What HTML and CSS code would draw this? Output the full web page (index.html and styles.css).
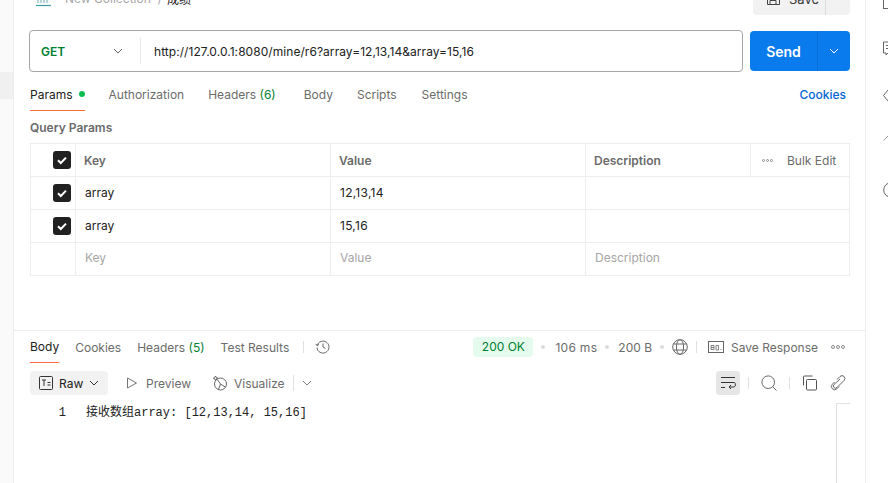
FILE: index.html
```html
<!DOCTYPE html>
<html lang="en">
<head>
<meta charset="utf-8">
<title>Postman request</title>
<link rel="stylesheet" href="styles.css">
</head>
<body>
<div class="app">
  <aside class="left-rail"><div class="rail-active"></div></aside>
  <main class="main">
    <header class="crumbs">
      <div class="crumb-left">
        <svg class="http-icon" width="16" height="16" viewBox="0 0 16 16"><path d="M1 14.500h15" stroke="#3d9ba3" stroke-width="1.200" fill="none"/><path d="M3 5v7M6 5v7M9 5v7M12 5v7" stroke="#6fa9ae" fill="none"/></svg>
        <span class="crumb-parent">New Collection</span>
        <span class="crumb-sep">/</span>
        <span class="crumb-current">成绩</span>
      </div>
      <div class="save-btn">
        <span class="save-main">
          <svg width="16" height="16" viewBox="0 0 16 16" fill="none" stroke="#444"><path d="M2.500 2.500h9l3 3v8h-12zM5 13.500v-4h6v4"/></svg>
          <span>Save</span>
        </span>
        <span class="save-caret"><svg width="10" height="10" viewBox="0 0 10 10"><path d="M2.500 3.500L5 6l2.500-2.500" stroke="#333" fill="none"/></svg></span>
      </div>
    </header>

    <section class="url-row">
      <div class="url-box">
        <div class="method">
          <span class="method-name">GET</span>
          <svg width="12" height="12" viewBox="0 0 12 12"><path d="M2 4l4 4 4-4" stroke="#666" fill="none"/></svg>
        </div>
        <div class="url-text">http://127.0.0.1:8080/mine/r6?array=12,13,14&amp;array=15,16</div>
      </div>
      <div class="send">
        <span class="send-main">Send</span>
        <span class="send-caret"><svg width="12" height="12" viewBox="0 0 12 12"><path d="M2 4l4 4 4-4" stroke="#fff" fill="none"/></svg></span>
      </div>
    </section>

    <nav class="req-tabs">
      <span class="tab active">Params<i class="dot"></i></span>
      <span class="tab t-auth">Authorization</span>
      <span class="tab t-head">Headers <em>(6)</em></span>
      <span class="tab t-body">Body</span>
      <span class="tab t-scripts">Scripts</span>
      <span class="tab">Settings</span>
      <span class="cookies">Cookies</span>
    </nav>

    <h2 class="qp-title">Query Params</h2>

    <div class="table">
      <div class="row head">
        <div class="cell check"><span class="box"><svg width="12" height="12" viewBox="0 0 12 12"><path d="M2 6.200l2.800 2.800L10 3.600" stroke="#fff" stroke-width="2" fill="none"/></svg></span></div>
        <div class="cell th th-key">Key</div>
        <div class="cell th th-value">Value</div>
        <div class="cell th desc-head">
          <span class="desc-label">Description</span>
          <span class="bulk"><i class="dots"><b></b><b></b><b></b></i><span>Bulk Edit</span></span>
        </div>
      </div>
      <div class="row body-row">
        <div class="cell check"><span class="box"><svg width="12" height="12" viewBox="0 0 12 12"><path d="M2 6.200l2.800 2.800L10 3.600" stroke="#fff" stroke-width="2" fill="none"/></svg></span></div>
        <div class="cell">array</div>
        <div class="cell num">12,13,14</div>
        <div class="cell"></div>
      </div>
      <div class="row body-row">
        <div class="cell check"><span class="box"><svg width="12" height="12" viewBox="0 0 12 12"><path d="M2 6.200l2.800 2.800L10 3.600" stroke="#fff" stroke-width="2" fill="none"/></svg></span></div>
        <div class="cell">array</div>
        <div class="cell num">15,16</div>
        <div class="cell"></div>
      </div>
      <div class="row last">
        <div class="cell check"></div>
        <div class="cell ph">Key</div>
        <div class="cell ph">Value</div>
        <div class="cell ph">Description</div>
      </div>
    </div>

    <section class="response">
      <div class="res-bar">
        <nav class="res-tabs">
          <span class="tab active">Body</span>
          <span class="tab">Cookies</span>
          <span class="tab">Headers <em>(5)</em></span>
          <span class="tab">Test Results</span>
          <i class="vsep hist-sep"></i>
          <svg class="hist" width="16" height="16" viewBox="0 0 16 16" fill="none" stroke="#666"><path d="M2.200 6.500A6 6 0 1 1 2 8.500M.8 5l1.400 1.800L4 5.400M8 4.500V8l2.500 1.500"/></svg>
        </nav>
        <div class="res-meta">
          <span class="status">200 OK</span>
          <i class="mdot"></i><span class="m-time">106 ms</span>
          <i class="mdot"></i><span class="m-size">200 B</span>
          <i class="mdot"></i>
          <svg class="globe" width="16" height="16" viewBox="0 0 16 16" fill="none" stroke="#666"><circle cx="8" cy="8" r="7.300"/><ellipse cx="8" cy="8" rx="3.600" ry="7.300"/><path d="M1.600 5h12.800M1.600 11h12.800"/></svg>
          <i class="vsep"></i>
          <span class="save-res">
            <svg width="16" height="12" viewBox="0 0 16 12" fill="none"><rect x=".5" y=".5" width="15" height="11" stroke="#666"/><path d="M3 4.500h3v4H3zM3 6.500h3M8 4.500h2.500v4.500H8zM12.500 8.500h1" stroke="#666" stroke-width=".8"/></svg>
            <span>Save Response</span>
          </span>
          <i class="dots big"><b></b><b></b><b></b></i>
        </div>
      </div>

      <div class="res-tools">
        <div class="raw">
          <svg width="14" height="14" viewBox="0 0 14 14" fill="none" stroke="#333"><rect x=".5" y=".5" width="13" height="13" rx="1"/><path d="M3 4h4M5 4v6M8.500 6.500h3M8.500 9h3"/></svg>
          <span>Raw</span>
          <svg width="10" height="10" viewBox="0 0 10 10"><path d="M1 3l4 4 4-4" stroke="#333" fill="none"/></svg>
        </div>
        <span class="tool preview">
          <svg width="12" height="12" viewBox="0 0 12 12" fill="none" stroke="#777"><path d="M1.500 1v10L10.500 6z"/></svg>
          <span>Preview</span>
        </span>
        <span class="tool visualize">
          <svg width="16" height="16" viewBox="0 0 16 16" fill="none" stroke="#666"><circle cx="8.500" cy="9" r="6"/><path d="M8.500 9L5 4.200M8.500 9l4.800 3M8.500 9l-2 5.500M3.500 1l.7 1.500 1.500.7-1.500.7-.7 1.500-.7-1.500-1.500-.7 1.500-.7z"/></svg>
          <span>Visualize</span>
        </span>
        <i class="vsep tall"></i>
        <svg class="vis-caret" width="10" height="10" viewBox="0 0 10 10"><path d="M1 3l4 4 4-4" stroke="#777" fill="none"/></svg>
        <div class="tool-right">
          <span class="wrap-btn"><svg width="16" height="14" viewBox="0 0 16 14" fill="none" stroke="#333"><path d="M1 1.500h14M1 6.500h13c2 0 2 4.500-.5 4.500H9M11 9l-2 2 2 2M1 11.500h4"/></svg></span>
          <i class="vsep"></i>
          <svg width="16" height="16" viewBox="0 0 16 16" fill="none" stroke="#666"><circle cx="7.200" cy="7.200" r="6.300"/><path d="M11.800 11.800L15.500 15.500"/></svg>
          <i class="vsep"></i>
          <svg width="16" height="16" viewBox="0 0 16 16" fill="none" stroke="#555"><path d="M1.500 10.500V2a1 1 0 0 1 1-1h8"/><rect x="4.500" y="4.500" width="10" height="10.500" rx="1"/></svg>
          <svg width="16" height="16" viewBox="0 0 16 16" fill="none" stroke="#666"><path d="M7 4.500l3-3a2.800 2.800 0 0 1 4 4L7 12.500a2 2 0 0 1-3-3L10 4M9 11.500l-2 2.200a3.200 3.200 0 0 1-4.700-4.400L4.500 7"/></svg>
        </div>
      </div>

      <div class="code-area">
        <div class="code-line"><span class="ln">1</span><span class="code"><span class="cjk">接收数组</span>array: [12,13,14, 15,16]</span></div>
        <div class="code-scroll"></div>
      </div>
    </section>
  </main>
  <aside class="right-rail">
    <svg width="16" height="16" viewBox="0 0 16 16" fill="none" stroke="#666"><rect x=".5" y=".5" width="13" height="13"/></svg>
    <svg width="16" height="16" viewBox="0 0 16 16" fill="none" stroke="#666"><path d="M.5 1h14v11H5l-2 2v-2H.5zM3 4.500h8M3 7.500h8"/></svg>
    <svg width="16" height="16" viewBox="0 0 16 16" fill="none" stroke="#666"><path d="M5 2L.5 7.500 5 13"/></svg>
    <svg width="16" height="16" viewBox="0 0 16 16" fill="none" stroke="#999"><path d="M.5 6.500L6 1"/></svg>
    <svg width="16" height="16" viewBox="0 0 16 16" fill="none" stroke="#666"><circle cx="8" cy="8" r="7.300"/></svg>
  </aside>
</div>
</body>
</html>
```
FILE: styles.css
```css
* { box-sizing: border-box; }
html, body { margin: 0; padding: 0; height: 100%; background: #fff; overflow: hidden; }
body { font-family: Inter, "Noto Sans CJK SC", sans-serif; font-size: 12px; color: #212121; }
svg { display: block; flex: none; }
i, em { font-style: normal; }

.app { display: flex; width: 888px; height: 483px; overflow: hidden; }

.left-rail { width: 14px; flex: none; background: #fafafa; border-right: 1px solid #ededed; padding-top: 72px; }
.rail-active { height: 27px; background: #f0f0f0; }

.main { width: 851px; flex: none; display: flex; flex-direction: column; height: 483px; }

.crumbs { display: flex; justify-content: space-between; align-items: center; height: 31px; margin-top: -16px; padding: 0 15px 0 21px; }
.crumb-left { display: flex; align-items: center; color: #a6a6a6; font-size: 12px; padding-bottom: 2px; }
.http-icon { margin-right: 14px; }
.crumb-sep { margin: 0 5px 0 7px; }
.crumb-current { color: #212121; font-size: 12px; }
.save-btn { display: flex; height: 31px; background: #f2f2f2; border-radius: 4px; }
.save-main { display: flex; align-items: center; gap: 8px; padding: 0 12px 2px; width: 73px; border-right: 1px solid #dcdcdc; font-size: 13px; color: #3a3a3a; }
.save-caret { width: 24px; display: flex; align-items: center; justify-content: center; padding-bottom: 2px; }

.url-row { display: flex; align-items: center; gap: 7px; margin: 15px 15px 0; height: 42px; }
.url-box { width: 714px; height: 42px; display: flex; align-items: center; border: 1px solid #a6a6a6; border-radius: 4px; }
.method { display: flex; align-items: center; justify-content: space-between; width: 111px; height: 26px; padding: 0 16px 0 11px; border-right: 1px solid #e6e6e6; }
.method-name { color: #007f31; font-size: 12px; font-weight: 600; }
.url-text { padding-left: 13px; font-size: 12px; letter-spacing: .055px; color: #212121; }
.send { display: flex; width: 100px; height: 40px; background: #097bed; color: #fff; border-radius: 4px; }
.send-main { width: 68px; display: flex; align-items: center; justify-content: center; font-size: 14px; font-weight: 600; border-right: 1px solid #0a6fd4; }
.send-caret { flex: 1; display: flex; align-items: center; justify-content: center; }

.req-tabs { display: flex; align-items: flex-start; height: 39px; margin: 0 15px 0 16px; }
.tab { display: inline-flex; align-items: center; height: 100%; color: #6b6b6b; font-size: 12px; white-space: pre; }
.tab em { color: #007f31; }
.tab.active { color: #212121; border-bottom: 1px solid #ff6c37; }
.req-tabs .tab { height: 39px; margin-right: 24px; padding-top: 6px; }
.req-tabs .tab.t-head { margin-right: 28px; }
.req-tabs .tab.t-scripts { margin-right: 25px; }
.dot { width: 6px; height: 6px; border-radius: 50%; background: #0cbb52; margin-left: 6px; }
.cookies { margin-left: auto; margin-right: 4px; padding-top: 15px; color: #0265d2; font-size: 12px; font-weight: 500; }

.qp-title { margin: 9px 15px 0 16px; height: 26px; font-size: 12px; line-height: 15px; font-weight: 600; color: #6b6b6b; }

.table { width: 820px; margin-left: 16px; border: 1px solid #ededed; border-bottom: 0; }
.row { display: grid; grid-template-columns: 45px 255px 255px 1fr; height: 33px; border-bottom: 1px solid #ededed; }
.cell { display: flex; align-items: center; padding-left: 9px; border-right: 1px solid #ededed; color: #212121; }
.cell:last-child { border-right: 0; }
.body-row .cell { padding-bottom: 2px; }
.last .cell { padding-bottom: 3px; }
.body-row .cell.check { padding-bottom: 0; }
.num { letter-spacing: .25px; }
.check { justify-content: flex-end; padding: 0 4px 0 0; }
.box { width: 18px; height: 18px; background: #212121; border-radius: 3px; display: flex; align-items: center; justify-content: center; }
.th { color: #6b6b6b; font-weight: 600; }
.th-key, .th-value { padding-left: 8px; }
.ph { color: #a6a6a6; }
.desc-head { justify-content: space-between; padding: 0 0 0 8px; }
.bulk { display: flex; align-items: center; gap: 14px; width: 99px; height: 100%; padding-left: 11px; border-left: 1px solid #ededed; color: #6b6b6b; font-weight: 400; }
.dots { display: inline-flex; gap: 1px; }
.dots b { width: 3px; height: 3px; border: 1px solid #8a8a8a; border-radius: 50%; }

.response { margin-top: 54px; border-top: 1px solid #ededed; flex: 1; }
.res-bar { display: flex; justify-content: space-between; height: 32px; margin: 0 15px 0 16px; }
.res-tabs { display: flex; align-items: center; gap: 16px; }
.res-tabs .tab { height: 32px; }
.hist-sep { margin-left: -2px; }
.hist { margin-left: -5px; }
.res-meta { display: flex; align-items: center; color: #6b6b6b; gap: 8px; margin-right: 5px; }
.status { background: #e5fbee; color: #007f31; font-size: 12px; width: 60px; text-align: center; height: 20px; line-height: 20px; border-radius: 4px; }
.m-time { margin-left: 2px; letter-spacing: .3px; }
.m-size { margin-left: 1px; }
.mdot { width: 4px; height: 4px; border-radius: 50%; background: #dcdcdc; }
.vsep { display: block; width: 1px; height: 12px; background: #e0e0e0; flex: none; }
.save-res { display: flex; align-items: center; gap: 7px; margin: 0 5px 0 3px; }
.dots.big b { width: 4px; height: 4px; }

.res-tools { display: flex; align-items: center; height: 24px; margin: 8px 15px 0 16px; color: #6b6b6b; }
.raw { display: flex; align-items: center; gap: 6px; width: 78px; height: 24px; padding: 0 9px; background: #f2f2f2; border-radius: 4px; color: #212121; }
.tool { display: flex; align-items: center; gap: 8px; }
.preview { margin-left: 18px; }
.visualize { margin-left: 21px; gap: 6px; }
.vsep.tall { height: 16px; margin: 0 8px; }
.tool-right { display: flex; align-items: center; gap: 12px; margin-left: auto; margin-right: 4px; }
.wrap-btn { display: flex; align-items: center; justify-content: center; width: 24px; height: 24px; margin-right: -4px; background: #e6e6e6; border-radius: 4px; }

.code-area { display: flex; justify-content: space-between; margin: 8px 15px 0 16px; height: 80px; }
.code-line { display: flex; align-items: baseline; font: 12px/15px "Liberation Mono", "Noto Sans CJK SC", monospace; color: #212121; }
.ln { width: 36px; text-align: right; margin-right: 20px; color: #212121; }
.cjk { font-family: "Noto Sans CJK SC", sans-serif; }
.code-scroll { width: 14px; height: 80px; border-left: 1px solid #e0e0e0; border-top: 1px solid #e0e0e0; }

.right-rail { flex: none; width: 23px; border-left: 1px solid #ededed; padding: 0 0 0 17px; display: flex; flex-direction: column; align-items: flex-start; overflow: hidden; }
.right-rail svg:nth-child(1) { margin-top: -5px; }
.right-rail svg:nth-child(2) { margin-top: 30px; }
.right-rail svg:nth-child(3) { margin-top: 31px; }
.right-rail svg:nth-child(4) { margin-top: 30px; }
.right-rail svg:nth-child(5) { margin-top: 32px; }
```
